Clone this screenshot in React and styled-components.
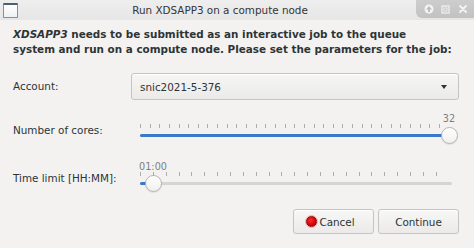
import React from 'react';
import styled, { createGlobalStyle } from 'styled-components';

const GlobalStyle = createGlobalStyle`
  html, body {
    margin: 0;
    padding: 0;
    background: #ffffff;
  }
  body {
    font-family: 'DejaVu Sans', 'Liberation Sans', sans-serif;
    color: #2e3436;
  }
`;

const Window = styled.div`
  width: 474px;
  height: 248px;
  background: #f3f2f1;
  display: flex;
  flex-direction: column;
  overflow: hidden;
`;

const TitleBar = styled.div`
  height: 20px;
  flex-shrink: 0;
  display: flex;
  align-items: flex-start;
  background: linear-gradient(#eeeeee, #e6e6e6);
`;

const AppIconBox = styled.div`
  width: 20px;
  height: 20px;
  display: flex;
  align-items: center;
  justify-content: center;
`;

const AppIcon = styled.div`
  width: 13px;
  height: 12px;
  border: 1px solid #8a8f96;
  border-top: 2px solid #4d5d74;
  background: linear-gradient(#ffffff, #eef0f3);
  border-radius: 1px;
`;

const Title = styled.div`
  flex: 1;
  height: 20px;
  line-height: 20px;
  text-align: center;
  padding-left: 4px;
  font-size: 10.4px;
  color: #333536;
`;

const Controls = styled.div`
  width: 58px;
  height: 18px;
  background: linear-gradient(#cdcdcd, #c2c2c2);
  border-bottom-left-radius: 6px;
  display: flex;
  align-items: center;
  justify-content: space-around;
  padding: 0 2px 0 4px;
  box-sizing: border-box;
`;

const Body = styled.div`
  flex: 1;
  padding: 7px 15px 0 13px;
  display: flex;
  flex-direction: column;
`;

const Intro = styled.p`
  margin: 0;
  font-size: 10.4px;
  line-height: 15px;
  font-weight: bold;
  color: #2e3436;

  em {
    font-style: italic;
  }
`;

const Row = styled.div`
  display: flex;
  align-items: ${({ top }) => (top ? 'flex-start' : 'center')};
  margin-top: ${({ gap }) => gap}px;
`;

const Label = styled.div`
  width: 118px;
  flex-shrink: 0;
  font-size: 10.4px;
  line-height: 15px;
  padding-top: ${({ pad }) => pad || 0}px;
  color: #2e3436;
`;

const Combo = styled.div`
  width: 328px;
  height: 27px;
  box-sizing: border-box;
  border: 1px solid #c6c4c2;
  border-radius: 3px;
  background: linear-gradient(#f6f6f5, #ebeae9);
  display: flex;
  align-items: center;
  justify-content: space-between;
  padding: 0 11px 0 8px;
  font-size: 10.4px;
  box-shadow: inset 0 1px #ffffff;
`;

const Arrow = styled.div`
  width: 0;
  height: 0;
  border-left: 3px solid transparent;
  border-right: 3px solid transparent;
  border-top: 4px solid #2e3436;
`;

const SliderBox = styled.div`
  position: relative;
  width: 328px;
  height: 36px;
`;

const ValueLabel = styled.div`
  position: absolute;
  top: 0;
  transform: translateX(-50%);
  font-size: 9.7px;
  line-height: 11px;
  color: #7d7f7f;
`;

const TickRow = styled.div`
  position: absolute;
  left: 9px;
  width: ${({ w }) => w}px;
  top: 11px;
  height: 4px;
  display: flex;
  justify-content: space-between;
`;

const Tick = styled.span`
  width: 1px;
  height: 4px;
  background: #acacac;
`;

const Trough = styled.div`
  position: absolute;
  left: 9px;
  top: 21px;
  width: 312px;
  height: 3px;
  border-radius: 2px;
  background: #d5d4d2;
`;

const Fill = styled.div`
  position: absolute;
  left: 9px;
  top: 21px;
  height: 3px;
  border-radius: 2px;
  background: #3a78cc;
`;

const Handle = styled.div`
  position: absolute;
  top: 14px;
  width: 17px;
  height: 17px;
  box-sizing: border-box;
  border-radius: 50%;
  border: 1px solid #b4b2b0;
  background: linear-gradient(#ffffff, #f1f0ef);
  box-shadow: 0 1px 1px rgba(0, 0, 0, 0.08);
`;

const Slider = ({ min, max, value, text, ticks }) => {
  const frac = (value - min) / (max - min);
  const x = 22 + frac * 296;
  return (
    <SliderBox>
      <ValueLabel style={{ left: x }}>{text}</ValueLabel>
      <TickRow w={ticks === 24 ? 297 : 300}>
        {Array.from({ length: ticks }, (_, i) => (
          <Tick key={i} />
        ))}
      </TickRow>
      <Trough />
      <Fill style={{ width: x - 9 }} />
      <Handle style={{ left: x - 8.5 }} />
    </SliderBox>
  );
};

const Buttons = styled.div`
  display: flex;
  justify-content: flex-end;
  gap: 4px;
  margin-top: 12px;
`;

const Button = styled.div`
  width: 81px;
  height: 25px;
  box-sizing: border-box;
  border: 1px solid #c6c4c2;
  border-radius: 3px;
  background: linear-gradient(#f7f7f6, #ebeae9);
  box-shadow: inset 0 1px #ffffff;
  display: flex;
  align-items: center;
  justify-content: center;
  gap: 2px;
  font-size: 10.4px;
  color: #2e3436;
`;

const StopDot = styled.span`
  width: 9px;
  height: 9px;
  border-radius: 50%;
  background: radial-gradient(circle at 40% 35%, #ff2a2a, #c80000 70%);
  border: 1px solid #9a0000;
  box-shadow: 0 0 0 1px rgba(220, 60, 60, 0.35);
  margin-left: -6px;
`;

const WinIcons = () => (
  <>
    <svg width="10" height="10" viewBox="0 0 10 10">
      <circle cx="5" cy="5" r="4.5" fill="#f4f4f4" />
      <path d="M5 2 L8 5.5 H6 V8 H4 V5.5 H2 Z" fill="#bdbdbd" />
    </svg>
    <svg width="9" height="9" viewBox="0 0 9 9">
      <rect x="1" y="1" width="7" height="7" fill="none" stroke="#f2f2f2" strokeWidth="1.2" />
      <rect x="3" y="3" width="3" height="3" fill="none" stroke="#f2f2f2" strokeWidth="0.8" />
    </svg>
    <svg width="10" height="10" viewBox="0 0 10 10">
      <path d="M2 2 L8 8 M8 2 L2 8" stroke="#f4f4f4" strokeWidth="1.8" strokeLinecap="round" />
    </svg>
  </>
);

const App = () => (
  <>
    <GlobalStyle />
    <Window>
      <TitleBar>
        <AppIconBox>
          <AppIcon />
        </AppIconBox>
        <Title>Run XDSAPP3 on a compute node</Title>
        <Controls>
          <WinIcons />
        </Controls>
      </TitleBar>
      <Body>
        <Intro>
          <em>XDSAPP3</em> needs to be submitted as an interactive job to the queue
          <br />
          system and run on a compute node. Please set the parameters for the job:
        </Intro>
        <Row gap={16}>
          <Label>Account:</Label>
          <Combo>
            <span>snic2021-5-376</span>
            <Arrow />
          </Combo>
        </Row>
        <Row top gap={13}>
          <Label pad={10}>Number of cores:</Label>
          <Slider min={1} max={32} value={32} text="32" ticks={32} />
        </Row>
        <Row top gap={12}>
          <Label pad={10}>Time limit [HH:MM]:</Label>
          <Slider min={1} max={24} value={1} text="01:00" ticks={24} />
        </Row>
        <Buttons>
          <Button>
            <StopDot />
            Cancel
          </Button>
          <Button>Continue</Button>
        </Buttons>
      </Body>
    </Window>
  </>
);

export default App;
